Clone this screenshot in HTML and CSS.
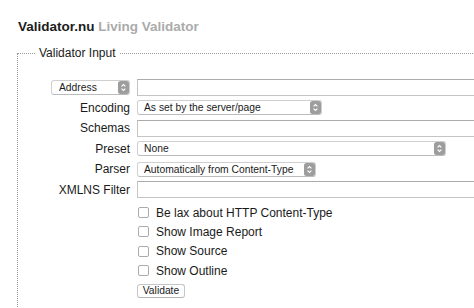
FILE: index.html
```html
<!DOCTYPE html>
<html lang="en">
<head>
    <meta charset="UTF-8">
    <meta name="viewport" content="width=device-width, initial-scale=1.0">
    <title>Validator.nu Living Validator</title>
    <link rel="stylesheet" href="styles.css">
</head>
<body>
    <h1 class="title">Validator.nu <span class="sub">Living Validator</span></h1>

    <form class="validator">
        <fieldset class="panel">
            <legend>Validator Input</legend>

            <div class="rows">
                <div class="row">
                    <div class="label">
                        <span class="select-wrap mode">
                            <select><option>Address</option></select>
                            <span class="stepper"><svg width="11" height="13" viewBox="0 0 11 13"><rect width="11" height="13" rx="2.5" fill="#9d9d9d"/><path d="M3.6 5.4 L5.5 3.5 L7.4 5.4 M3.6 7.6 L5.5 9.5 L7.4 7.6" fill="none" stroke="#fff" stroke-width="1.1"/></svg></span>
                        </span>
                    </div>
                    <input type="text" class="text">
                </div>

                <div class="row">
                    <label class="label">Encoding</label>
                    <span class="select-wrap encoding">
                        <select><option>As set by the server/page</option></select>
                        <span class="stepper"><svg width="11" height="13" viewBox="0 0 11 13"><rect width="11" height="13" rx="2.5" fill="#9d9d9d"/><path d="M3.6 5.4 L5.5 3.5 L7.4 5.4 M3.6 7.6 L5.5 9.5 L7.4 7.6" fill="none" stroke="#fff" stroke-width="1.1"/></svg></span>
                    </span>
                </div>

                <div class="row">
                    <label class="label">Schemas</label>
                    <input type="text" class="text">
                </div>

                <div class="row">
                    <label class="label">Preset</label>
                    <span class="select-wrap preset">
                        <select><option>None</option></select>
                        <span class="stepper"><svg width="11" height="13" viewBox="0 0 11 13"><rect width="11" height="13" rx="2.5" fill="#9d9d9d"/><path d="M3.6 5.4 L5.5 3.5 L7.4 5.4 M3.6 7.6 L5.5 9.5 L7.4 7.6" fill="none" stroke="#fff" stroke-width="1.1"/></svg></span>
                    </span>
                </div>

                <div class="row">
                    <label class="label">Parser</label>
                    <span class="select-wrap parser">
                        <select><option>Automatically from Content-Type</option></select>
                        <span class="stepper"><svg width="11" height="13" viewBox="0 0 11 13"><rect width="11" height="13" rx="2.5" fill="#9d9d9d"/><path d="M3.6 5.4 L5.5 3.5 L7.4 5.4 M3.6 7.6 L5.5 9.5 L7.4 7.6" fill="none" stroke="#fff" stroke-width="1.1"/></svg></span>
                    </span>
                </div>

                <div class="row">
                    <label class="label">XMLNS Filter</label>
                    <input type="text" class="text">
                </div>

                <div class="checks">
                    <label class="check"><input type="checkbox"> Be lax about HTTP Content-Type</label>
                    <label class="check"><input type="checkbox"> Show Image Report</label>
                    <label class="check"><input type="checkbox"> Show Source</label>
                    <label class="check"><input type="checkbox"> Show Outline</label>
                    <div class="submit-row">
                        <button type="button">Validate</button>
                    </div>
                </div>
            </div>
        </fieldset>
    </form>
</body>
</html>
```

FILE: styles.css
```css
html, body {
    overflow: hidden;
}
body {
    margin: 0;
    padding-left: 17px;
    font-family: "Liberation Sans", Arial, sans-serif;
    font-size: 12px;
    color: #1a1a1a;
    background-color: #fff;
}
.title {
    font-size: 13.5px;
    line-height: 16px;
    font-weight: bold;
    color: #1c1c1c;
    margin: 19px 0 11px 1px;
}
.title .sub {
    color: #ababab;
}
.panel {
    width: 600px;
    min-height: 300px;
    margin: 0;
    padding: 17px 0 0 18px;
    border: 1px dotted #9a9a9a;
}
.panel legend {
    padding: 0 3px;
    font-size: 12px;
    line-height: 14px;
    color: #1a1a1a;
}
.rows {
    padding-left: 15px;
}
.row {
    display: flex;
    align-items: center;
    gap: 7px;
    height: 20.5px;
}
.label {
    width: 79px;
    flex: none;
    text-align: right;
    display: flex;
    justify-content: flex-end;
    align-items: center;
}
.text {
    width: 380px;
    height: 17px;
    box-sizing: border-box;
    border: 1px solid #c4c4c4;
    border-top-color: #acacac;
    border-radius: 0;
    padding: 0 4px;
    margin: 0;
    font: inherit;
}
.select-wrap {
    position: relative;
    display: inline-block;
    height: 15px;
}
.select-wrap select {
    appearance: none;
    -webkit-appearance: none;
    width: 100%;
    height: 15px;
    box-sizing: border-box;
    margin: 0;
    padding: 0 16px 0 6px;
    border: 1px solid #cfcfcf;
    border-bottom-color: #bcbcbc;
    border-radius: 3px;
    background-color: #fff;
    font-family: "Liberation Sans", Arial, sans-serif;
    font-size: 10.3px;
    line-height: 13px;
    color: #1a1a1a;
}
.select-wrap .stepper {
    position: absolute;
    right: 1px;
    top: 1px;
    width: 11px;
    height: 13px;
    pointer-events: none;
}
.select-wrap .stepper svg {
    display: block;
}
.mode {
    width: 79px;
}
.mode select {
    padding-left: 7px;
}
.encoding {
    width: 185px;
}
.preset {
    width: 309px;
}
.parser {
    width: 179px;
}
.checks {
    padding-left: 87px;
    padding-top: 3px;
}
.check {
    display: flex;
    align-items: center;
    gap: 7px;
    height: 19.3px;
}
.check input {
    appearance: none;
    -webkit-appearance: none;
    width: 11px;
    height: 11px;
    margin: 0;
    border: 1px solid #ababab;
    border-radius: 2px;
    background-color: #fff;
}
.submit-row {
    margin-top: 3px;
    margin-left: -1px;
}
.submit-row button {
    height: 14px;
    width: 48px;
    padding: 0;
    margin: 0;
    border: 1px solid #c6c6c6;
    border-bottom-color: #b4b4b4;
    border-radius: 3px;
    background-color: #fff;
    font-family: "Liberation Sans", Arial, sans-serif;
    font-size: 10.3px;
    line-height: 12px;
    color: #1a1a1a;
}
```
